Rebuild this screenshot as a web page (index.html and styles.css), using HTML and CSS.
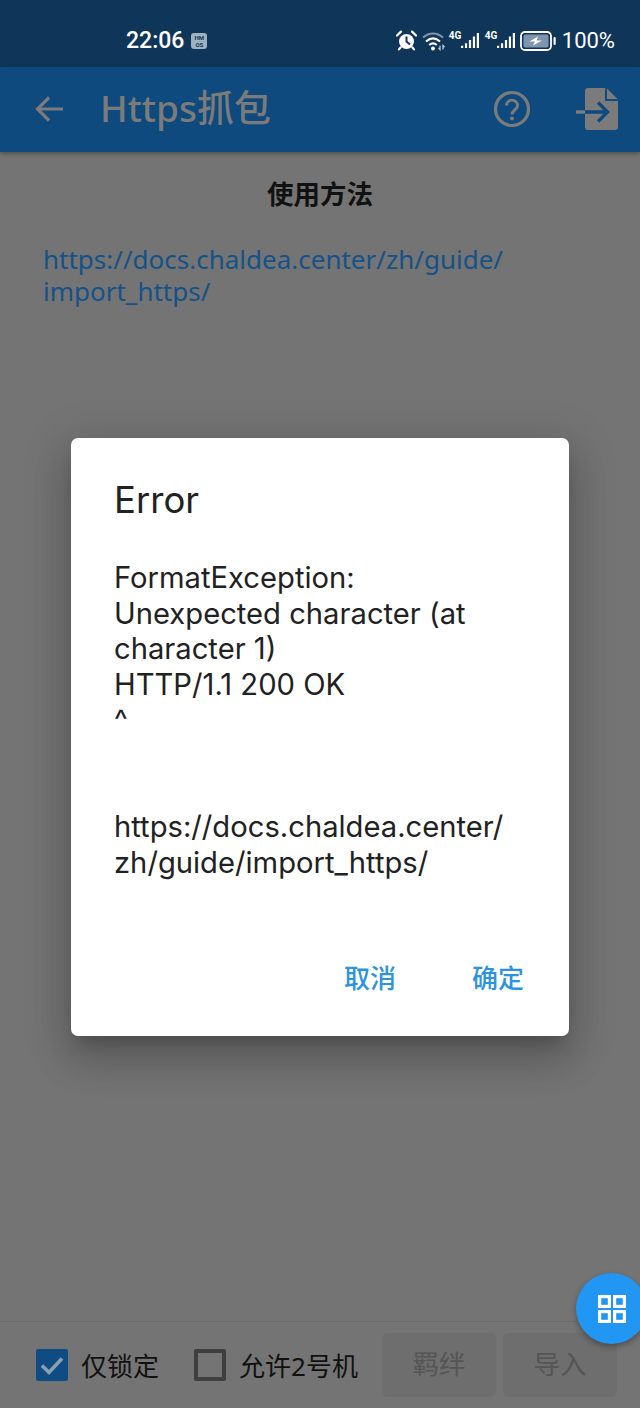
FILE: index.html
```html
<!DOCTYPE html>
<html lang="zh">
<head>
<meta charset="UTF-8">
<title>Https抓包</title>
<meta name="viewport" content="width=device-width,initial-scale=1">
<link rel="stylesheet" href="styles.css">
</head>
<body>
<div class="app">

  <!-- status bar -->
  <div class="status">
    <div class="status-left">
      <span class="time">22:06</span>
      <span class="hmos">HM<br>OS</span>
    </div>
    <div class="status-right">
      <svg class="ic-alarm" width="21" height="21" viewBox="0 0 21 21">
        <circle cx="10.500" cy="11.500" r="7.500" fill="#fff"/>
        <path d="M1 5.500 5 1.600M20 5.500 16 1.600M4.600 17.400 3 19.400M16.400 17.400 18 19.400" stroke="#fff" stroke-width="2.200" stroke-linecap="round" fill="none"/>
        <path d="M10.500 6.500v5l3.500 3" stroke="#0f3659" stroke-width="2" fill="none"/>
      </svg>
      <svg class="ic-wifi" width="24" height="20" viewBox="0 0 24 20">
        <path d="M1 6.500C7 1 15 1 21 6.500" stroke="#7f95ab" stroke-width="2" fill="none"/>
        <path d="M4 10.500C8.500 6.500 13.500 6.500 18 10.500M7.200 14C9.500 12 12.500 12 14.800 14" stroke="#fff" stroke-width="2" fill="none"/>
        <circle cx="11" cy="17.500" r="2" fill="#fff"/>
        <path d="M18 14.500v4l-1.500-1.500M21 18.500v-4l1.500 1.500" stroke="#c9d3dc" stroke-width="1.200" fill="none"/>
      </svg>
      <div class="signal">
        <span class="net">4G</span>
        <svg width="21" height="19" viewBox="0 0 21 19"><path d="M0 15.500h2.500V18H0zM4.500 12.500H7V18H4.500zM9 9h2.500v9H9zM13.500 5H16v13h-2.500zM18 1h2.500v17H18z" fill="#fff"/></svg>
      </div>
      <div class="signal">
        <span class="net">4G</span>
        <svg width="21" height="19" viewBox="0 0 21 19"><path d="M0 15.500h2.500V18H0zM4.500 12.500H7V18H4.500zM9 9h2.500v9H9zM13.500 5H16v13h-2.500zM18 1h2.500v17H18z" fill="#fff"/></svg>
      </div>
      <svg class="ic-batt" width="36" height="20" viewBox="0 0 36 20">
        <rect x="1" y="1" width="30" height="18" rx="4" fill="none" stroke="#fff" stroke-width="1.800"/>
        <rect x="3.500" y="3.500" width="25" height="13" rx="2" fill="#7f95ab"/>
        <path d="M18 5.500 9.500 10.500h5.500l-2 4 9-5h-5.500z" fill="#fff"/>
        <rect x="33.500" y="6" width="2.200" height="8" rx="1" fill="#fff"/>
      </svg>
      <span class="pct">100%</span>
    </div>
  </div>

  <div class="appbar">
    <svg class="back" width="30" height="28" viewBox="0 0 30 28"><path d="M28 14H3M14 2.500 2.500 14 14 25.500" stroke="#7b7b7b" stroke-width="3.200" fill="none"/></svg>
    <div class="title">Https抓包</div>
    <svg class="help" width="38" height="38" viewBox="0 0 38 38">
      <circle cx="19" cy="19" r="16.500" stroke="#7b7b7b" stroke-width="3.200" fill="none"/>
      <path d="M13.500 15.500c0-7 11-7 11 0 0 4.500-5.500 4.500-5.500 9" stroke="#7b7b7b" stroke-width="3" fill="none"/>
      <circle cx="19" cy="28.500" r="2" fill="#7b7b7b"/>
    </svg>
    <svg class="import" width="44" height="44" viewBox="0 0 44 44">
      <path d="M10 4a3 3 0 0 1 3-3h17l13 13v26a3 3 0 0 1-3 3H13a3 3 0 0 1-3-3z" fill="#7b7b7b"/>
      <path d="M30 1 43 14H30z" fill="#0f4a7e"/>
      <path d="M32 1.500 42.500 12H32z" fill="#7b7b7b"/>
      <path d="M10 25H31M23 15.500 32.500 25 23 34.500" stroke="#0f4a7e" stroke-width="3.400" fill="none"/>
      <path d="M1 25H10" stroke="#7b7b7b" stroke-width="3.400"/>
    </svg>
  </div>

  <div class="content">
    <h3 class="usage">使用方法</h3>
    <a class="link">https://docs.chaldea.center/zh/guide/<br>import_https/</a>
  </div>

  <div class="bottom">
    <label class="check"><span class="box on"><svg width="32" height="32" viewBox="0 0 32 32"><path d="M6 16.500 13 23.500 26 9.500" stroke="#8a9fb0" stroke-width="3.600" fill="none"/></svg></span>仅锁定</label>
    <label class="check"><span class="box"></span>允许2号机</label>
    <div class="btns">
      <button class="btn">羁绊</button>
      <button class="btn">导入</button>
    </div>
  </div>

  <!-- dialog -->
  <div class="overlay">
    <div class="dialog">
      <div class="dlg-title">Error</div>
      <div class="dlg-body">
        FormatException:<br>
        Unexpected character (at character 1)<br>
        HTTP/1.1 200 OK<br>
        ^<br>
        <br>
        <br>
        https://docs.chaldea.center/<br>zh/guide/import_https/
      </div>
      <div class="dlg-actions">
        <a class="dlg-btn">取消</a>
        <a class="dlg-btn">确定</a>
      </div>
    </div>
  </div>

  <div class="fab">
    <svg width="30" height="30" viewBox="0 0 30 30">
      <g fill="none" stroke="#fff" stroke-width="3.200">
        <rect x="2.600" y="2.600" width="9.800" height="9.800"/>
        <rect x="17.600" y="2.600" width="9.800" height="9.800"/>
        <rect x="2.600" y="17.600" width="9.800" height="9.800"/>
        <rect x="17.600" y="17.600" width="9.800" height="9.800"/>
      </g>
    </svg>
  </div>
</div>
</body>
</html>
```

FILE: styles.css
```css
html,body{margin:0;padding:0}
body{background:#747474;color:#212121;font-family:"Noto Sans","Noto Sans CJK SC",sans-serif}
.app{position:relative;width:640px;height:1408px;overflow:hidden;display:flex;flex-direction:column;background:#747474}

/* status bar */
.status{height:67px;flex:none;background:#0f3659;color:#fff;display:flex;align-items:center;justify-content:space-between;padding:14px 25px 0 126px;box-sizing:border-box;font-family:Roboto,sans-serif}
.status-left,.status-right{display:flex;align-items:center}
.time{font-size:23px;font-weight:500}
.hmos{width:16px;height:16px;margin-left:7px;border-radius:3px;background:#9fb0c0;color:#0f3659;font-size:6px;line-height:7px;font-weight:700;text-align:center;padding-top:1px;box-sizing:border-box}
.ic-alarm{margin-right:5px}
.ic-wifi{margin-right:3px}
.signal{display:flex;align-items:flex-end;width:36px;height:19px}
.signal svg{margin-left:auto;margin-right:5px}
.net{font-size:10px;font-weight:700;line-height:9px;align-self:flex-start}
.ic-batt{margin:0 6px 0 -1px}
.pct{font-size:22px}

/* app bar */
.appbar{height:85px;flex:none;background:#0f4a7e;color:#7b7b7b;display:flex;align-items:center;box-shadow:0 2px 4px rgba(0,0,0,.3);position:relative;padding:0 0 2px 35px;box-sizing:border-box}
.title{font-size:37px;font-weight:500;margin:0 0 5px 35px;flex:1}
.help{margin-right:44px}
.import{margin-right:21px}

/* page content */
.content{flex:1;padding:0 43px}
.usage{margin:25px 0 0;text-align:center;font-size:26.500px;font-weight:700;line-height:34px;color:#111}
.link{display:block;margin-top:32px;font-size:26px;line-height:32px;color:#155288}

/* bottom bar */
.bottom{height:87px;flex:none;border-top:1px solid #6c6c6c;display:flex;align-items:center;padding:0 23px 0 36px;box-sizing:border-box;font-size:26px;color:#111}
.check{display:flex;align-items:center;white-space:nowrap}
.check + .check{margin-left:35px}
.box{width:32px;height:32px;box-sizing:border-box;border:4px solid #3f3f3f;border-radius:2px;margin-right:13px}
.box.on{background:#0f4c84;border:none}
.box svg{display:block}
.btns{margin-left:auto;display:flex;gap:7px}
.btn{width:114px;height:64px;border:none;border-radius:6px;background:#6e6e6e;color:#555;font-size:26.500px;font-family:inherit;padding:0 0 5px}

/* dialog */
.overlay{position:absolute;left:0;right:0;top:0;bottom:0;padding-top:66px;box-sizing:border-box;display:flex;align-items:center;justify-content:center}
.dialog{width:498px;height:598px;box-sizing:border-box;background:#fff;border-radius:7px;padding:39px 44px 0 43px;display:flex;flex-direction:column;box-shadow:0 11px 15px -7px rgba(0,0,0,.2),0 24px 38px 3px rgba(0,0,0,.14),0 9px 46px 8px rgba(0,0,0,.12)}
.dlg-title{font-size:36.500px;line-height:46px;color:#212121;font-family:Inter,sans-serif}
.dlg-body{margin-top:37px;font-size:29.200px;line-height:35.600px;color:#212121;font-family:Inter,sans-serif}
.dlg-actions{margin-top:auto;margin-bottom:41px;display:flex;justify-content:flex-end;gap:76px;padding-right:1px}
.dlg-btn{font-size:26px;font-weight:500;line-height:34px;color:#2c93dd}

/* floating button */
.fab{position:absolute;left:576px;top:1273px;width:71px;height:71px;border-radius:50%;background:#2196f3;display:flex;align-items:center;justify-content:center;box-shadow:0 3px 6px rgba(0,0,0,.3)}
```
